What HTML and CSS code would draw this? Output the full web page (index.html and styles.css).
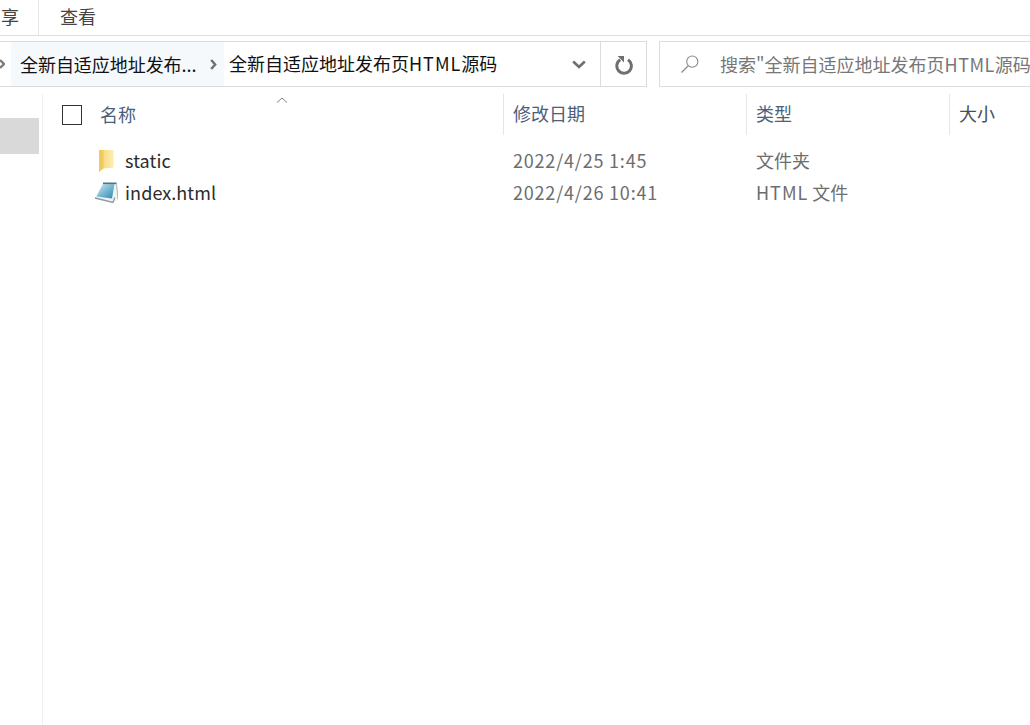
FILE: index.html
```html
<!DOCTYPE html>
<html lang="zh-CN">
<head>
<meta charset="utf-8">
<title>全新自适应地址发布页HTML源码</title>
<link rel="stylesheet" href="styles.css">
</head>
<body>
<div class="window">
  <div class="ribbon">
    <div class="tab tab-share">享</div>
    <div class="tab tab-view">查看</div>
  </div>
  <div class="addressbar">
    <div class="address">
      <svg class="crumb-arrow first" width="6" height="10" viewBox="0 0 6 10"><path d="M1 1l4 4-4 4" fill="none" stroke="#7c7c7c" stroke-width="2.400"/></svg>
      <div class="crumb-hover">
        <span class="crumb-text">全新自适应地址发布...</span>
        <svg class="crumb-arrow" width="7" height="11" viewBox="0 0 7 11"><path d="M1.200 1l4 4.500-4 4.500" fill="none" stroke="#6f6f6f" stroke-width="2.400"/></svg>
      </div>
      <span class="crumb-current">全新自适应地址发布页<span class="wide">HTML</span>源码</span>
      <div class="drop">
        <svg width="14" height="9" viewBox="0 0 14 9"><path d="M1.200 1.500L7 7l5.800-5.500" fill="none" stroke="#6f6f6f" stroke-width="2.600"/></svg>
      </div>
      <div class="refresh">
        <svg width="18" height="20" viewBox="0 0 18 20"><path d="M5.200 4.800A7.300 7.300 0 1 0 13 4.800" fill="none" stroke="#6f6f6f" stroke-width="3"/><path d="M2.600 1h6.400v6.400z" fill="#6f6f6f"/></svg>
      </div>
    </div>
    <div class="search">
      <svg class="search-icon" width="20" height="20" viewBox="0 0 20 20"><circle cx="12.300" cy="7.600" r="5.600" fill="none" stroke="#8a8a8a" stroke-width="1.100"/><path d="M8 12L1.500 18.500" fill="none" stroke="#8a8a8a" stroke-width="1.300"/></svg>
      <span class="search-text">搜索"全新自适应地址发布页<span class="tight">HTML</span>源码</span>
    </div>
  </div>
  <div class="main">
    <aside class="nav"><div class="nav-selected"></div></aside>
    <section class="files">
      <div class="sort-mark"><svg width="12" height="6" viewBox="0 0 12 6"><path d="M1 5.500L6 1l5 4.500" fill="none" stroke="#808080" stroke-width="1"/></svg></div>
      <div class="header">
        <div class="col col-name"><span class="check"></span><span>名称</span></div>
        <div class="col col-date">修改日期</div>
        <div class="col col-type">类型</div>
        <div class="col col-size">大小</div>
      </div>
      <div class="row">
        <div class="cell-name">
          <svg class="file-icon" width="24" height="24" viewBox="0 0 24 24">
            <defs><linearGradient id="fold" x1="0" x2="1" y1="0" y2="0"><stop offset="0" stop-color="#f6d470"/><stop offset="1" stop-color="#fdeeb2"/></linearGradient></defs>
            <path d="M5 1h14.500v17.500L9 19.500l-4 3z" fill="url(#fold)"/><path d="M5 1h4.500v18.500L5 23z" fill="#f0c95f"/>
          </svg>
          <span>static</span>
        </div>
        <div class="cell-date">2022/4/25 1:45</div>
        <div class="cell-type">文件夹</div>
      </div>
      <div class="row">
        <div class="cell-name">
          <svg class="file-icon" width="24" height="24" viewBox="0 0 24 24">
            <defs><linearGradient id="doc" x1="0" x2="1" y1="0" y2="1"><stop offset="0" stop-color="#d7ecf2"/><stop offset=".55" stop-color="#6fb4d0"/><stop offset="1" stop-color="#2f84ad"/></linearGradient></defs>
            <path d="M9 2h14l1 17-5 2.500L1 17z" fill="#f0f3f2"/>
            <path d="M9 3h11.500l-2.500 14.500L2.500 15.500z" fill="url(#doc)"/>
            <path d="M9 2.300h13.500" fill="none" stroke="#5f7075" stroke-width="1.600"/>
            <path d="M1 17l18 4.500 1.800-5" fill="none" stroke="#8a9ca2" stroke-width="1.300"/>
            <path d="M22.500 3L24 18.500" fill="none" stroke="#a9b7ba" stroke-width="1"/>
          </svg>
          <span>index.html</span>
        </div>
        <div class="cell-date">2022/4/26 10:41</div>
        <div class="cell-type"><span class="wide">HTML</span> 文件</div>
      </div>
    </section>
  </div>
</div>
</body>
</html>
```
FILE: styles.css
```css
* { box-sizing: border-box; }
html, body { margin: 0; padding: 0; background: #fff; }
body {
  width: 1030px;
  height: 725px;
  overflow: hidden;
  font-family: "Noto Sans CJK SC", "Noto Sans", sans-serif;
  font-size: 18px;
  color: #1a1a1a;
}
.window { width: 1030px; height: 725px; display: flex; flex-direction: column; overflow: hidden; }
.wide { letter-spacing: 1px; }
.tight { letter-spacing: 0.500px; }

.ribbon {
  height: 36px;
  display: flex;
  border-bottom: 1px solid #dedede;
  color: #444;
  line-height: 32px;
  flex: none;
}
.tab { height: 35px; }
.tab-share { width: 39px; padding-left: 1px; border-right: 1px solid #e6e6e6; }
.tab-view { padding-left: 21px; }

.addressbar {
  flex: none;
  height: 46px;
  margin-top: 5px;
  display: flex;
  overflow: hidden;
}
.address {
  width: 647px;
  flex: none;
  display: flex;
  align-items: stretch;
  border: 1px solid #dcdcdc;
  border-left: 0;
}
.crumb-arrow.first { margin: 0 6px 0 -1px; }
.crumb-arrow { align-self: center; flex: none; }
.crumb-hover {
  width: 213px;
  flex: none;
  display: flex;
  align-items: center;
  background: #f5f9fc;
  padding-left: 9px;
  color: #111;
  line-height: 42px;
}
.crumb-text { width: 190px; white-space: nowrap; flex: none; letter-spacing: -0.050px; }
.crumb-current { padding-left: 5px; line-height: 42px; color: #111; white-space: nowrap; flex: 1; }
.drop { width: 43px; flex: none; display: flex; align-items: center; justify-content: center; padding-top: 1px; padding-left: 1px; }
.refresh {
  width: 46px;
  flex: none;
  border-left: 1px solid #dcdcdc;
  display: flex;
  align-items: center;
  justify-content: center;
  padding-top: 1px;
}
.search {
  margin-left: 12px;
  width: 371px;
  flex: none;
  display: flex;
  align-items: center;
  border: 1px solid #dcdcdc;
  border-right: 0;
  color: #777;
  white-space: nowrap;
  line-height: 42px;
}
.search-icon { margin-left: 20px; flex: none; }
.search-text { margin-left: 20px; }

.main { flex: 1; display: flex; margin-top: 7px; }
.nav { width: 43px; flex: none; border-right: 1px solid #f0f0f0; padding-top: 24px; }
.nav-selected { width: 39px; height: 36px; background: #d9d9d9; }
.files { flex: 1; position: relative; }
.sort-mark { position: absolute; left: 233px; top: 1px; line-height: 0; }
.header { display: flex; height: 41px; color: #4c607a; line-height: 39px; }
.col { height: 41px; white-space: nowrap; }
.col-name { width: 460px; display: flex; align-items: center; padding-left: 19px; gap: 18px; }
.col-date { width: 243px; padding-left: 9px; border-left: 1px solid #e6e6e6; }
.col-type { width: 203px; padding-left: 9px; border-left: 1px solid #e6e6e6; }
.col-size { flex: 1; padding-left: 9px; border-left: 1px solid #e6e6e6; color: #444f5e; }
.check { width: 20px; height: 20px; border: 1.500px solid #333; background: #fff; flex: none; }
.row { display: flex; height: 32px; line-height: 30px; color: #6d6d6d; }
.header + .row { margin-top: 10px; }
.cell-name { width: 460px; height: 30px; display: flex; align-items: center; padding-left: 51px; color: #2b2b2b; position: relative; white-space: nowrap; }
.file-icon { position: absolute; left: 51px; top: 4px; }
.cell-name span { margin-left: 31px; letter-spacing: 0.100px; }
.cell-date { width: 243px; padding-left: 10px; white-space: nowrap; letter-spacing: 0.800px; }
.cell-type { padding-left: 10px; white-space: nowrap; }
```
